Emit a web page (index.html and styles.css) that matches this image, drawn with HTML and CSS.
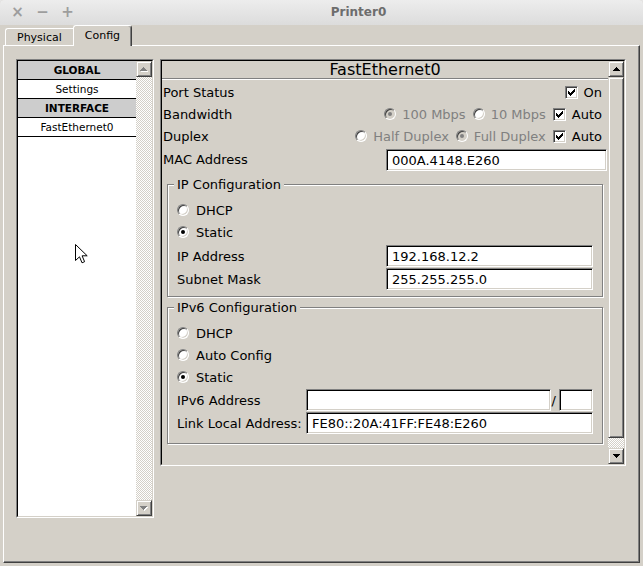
FILE: index.html
```html
<!DOCTYPE html>
<html lang="en">
<head>
<meta charset="utf-8">
<title>Printer0</title>
<link rel="stylesheet" href="styles.css">
</head>
<body>
<div class="window">
  <header class="titlebar">
    <div class="wm-buttons">
      <span class="wm-btn">×</span>
      <span class="wm-btn">−</span>
      <span class="wm-btn">+</span>
    </div>
    <div class="title">Printer0</div>
  </header>

  <nav class="tabs">
    <div class="tab">Physical</div>
    <div class="tab active">Config</div>
  </nav>

  <div class="pane">
    <div class="sidebar sunken">
      <div class="sunken-in list-wrap">
        <ul class="list">
          <li class="item header">GLOBAL</li>
          <li class="item">Settings</li>
          <li class="item header">INTERFACE</li>
          <li class="item">FastEthernet0</li>
        </ul>
        <div class="vscroll">
          <div class="sbtn"><svg class="arrow" width="8" height="5" viewBox="0 0 8 5"><path class="hl" d="M4 1h1v1h1v1h1v1h1v1H1V4h1V3h1V2h1z"/><path class="dis" d="M3 0h1v1h1v1h1v1h1v1H0V3h1V2h1V1h1z"/></svg></div>
          <div class="track"></div>
          <div class="sbtn"><svg class="arrow" width="8" height="5" viewBox="0 0 8 5"><path class="hl" d="M1 1h7v1H7v1H6v1H5v1H4V4H3V3H2V2H1z"/><path class="dis" d="M0 0h7v1H6v1H5v1H4v1H3V3H2V2H1V1H0z"/></svg></div>
        </div>
      </div>
    </div>

    <div class="main sunken">
      <div class="sunken-in panel">
        <div class="content">
          <div class="panel-title">FastEthernet0</div>
          <div class="rows">
            <div class="row">
              <span class="label">Port Status</span>
              <span class="ctrls">
                <span class="check"><svg width="9" height="9" viewBox="0 0 9 9"><path d="M1 3h1v1h1v1h1V4h1V3h1V2h1V1h1v3H7v1H6v1H5v1H4v1H3V7H2V6H1z"/></svg></span>
                <span class="ctext">On</span>
              </span>
            </div>
            <div class="row">
              <span class="label">Bandwidth</span>
              <span class="ctrls">
                <span class="opt"><span class="radio checked disabled"></span><span class="otext dim">100 Mbps</span></span>
                <span class="opt"><span class="radio"></span><span class="otext dim">10 Mbps</span></span>
                <span class="check"><svg width="9" height="9" viewBox="0 0 9 9"><path d="M1 3h1v1h1v1h1V4h1V3h1V2h1V1h1v3H7v1H6v1H5v1H4v1H3V7H2V6H1z"/></svg></span>
                <span class="ctext">Auto</span>
              </span>
            </div>
            <div class="row">
              <span class="label">Duplex</span>
              <span class="ctrls">
                <span class="opt"><span class="radio"></span><span class="otext dim">Half Duplex</span></span>
                <span class="opt"><span class="radio checked disabled"></span><span class="otext dim">Full Duplex</span></span>
                <span class="check"><svg width="9" height="9" viewBox="0 0 9 9"><path d="M1 3h1v1h1v1h1V4h1V3h1V2h1V1h1v3H7v1H6v1H5v1H4v1H3V7H2V6H1z"/></svg></span>
                <span class="ctext">Auto</span>
              </span>
            </div>
            <div class="row mac">
              <span class="label">MAC Address</span>
              <input class="field mac-field" type="text" value="000A.4148.E260">
            </div>
          </div>

          <div class="group ip">
            <div class="group-title">IP Configuration</div>
            <div class="opt-row"><span class="radio"></span><span>DHCP</span></div>
            <div class="opt-row"><span class="radio checked"></span><span>Static</span></div>
            <div class="field-row first">
              <span class="flabel">IP Address</span>
              <input class="field" type="text" value="192.168.12.2">
            </div>
            <div class="field-row">
              <span class="flabel">Subnet Mask</span>
              <input class="field" type="text" value="255.255.255.0">
            </div>
          </div>

          <div class="group v6">
            <div class="group-title">IPv6 Configuration</div>
            <div class="opt-row"><span class="radio"></span><span>DHCP</span></div>
            <div class="opt-row"><span class="radio"></span><span>Auto Config</span></div>
            <div class="opt-row"><span class="radio checked"></span><span>Static</span></div>
            <div class="field-row">
              <span class="flabel">IPv6 Address</span>
              <input class="field" type="text" value="">
              <span class="slash">/</span>
              <input class="field prefix" type="text" value="">
            </div>
            <div class="field-row">
              <span class="flabel">Link Local Address:</span>
              <input class="field" type="text" value="FE80::20A:41FF:FE48:E260">
            </div>
          </div>
        </div>

        <div class="vscroll">
          <div class="sbtn"><svg class="arrow" width="7" height="4" viewBox="0 0 7 4"><path d="M3 0h1v1h1v1h1v1h1v1H0V3h1V2h1V1h1z"/></svg></div>
          <div class="thumb"></div>
          <div class="track"></div>
          <div class="sbtn"><svg class="arrow" width="7" height="4" viewBox="0 0 7 4"><path d="M0 0h7v1H6v1H5v1H4v1H3V3H2V2H1V1H0z"/></svg></div>
        </div>
      </div>
    </div>
  </div>

  <svg class="cursor" width="13" height="20" viewBox="0 0 13 20"><path d="M0.5 0.5V16.5L4.5 12.8L7 18.8L9.6 17.7L7.1 11.8H12.2Z"/></svg>
</div>
</body>
</html>
```

FILE: styles.css
```css
* { box-sizing: border-box; }

html, body { margin: 0; padding: 0; }
html { background: #e6e6e6; }

body {
  width: 643px;
  height: 566px;
  overflow: hidden;
  font-family: "DejaVu Sans", "Liberation Sans", sans-serif;
  font-size: 13px;
  line-height: 15px;
  color: #000;
}

.window {
  position: relative;
  width: 643px;
  height: 566px;
  display: flex;
  flex-direction: column;
  background: #d4d0c8;
  border-radius: 4px 4px 0 0;
  overflow: hidden;
}

/* title bar */
.titlebar {
  flex: none;
  height: 25px;
  display: flex;
  align-items: center;
  background: linear-gradient(#ededed, #dcdcdc);
}
.wm-buttons {
  width: 80px;
  padding-left: 5px;
  display: flex;
}
.wm-btn {
  width: 25px;
  text-align: center;
  color: #9d9d9d;
  font-weight: bold;
  font-size: 15px;
  line-height: 25px;
}
.title {
  flex: 1;
  text-align: center;
  padding-right: 6px;
  font-weight: bold;
  font-size: 12px;
  color: #6d6d6d;
}

/* tabs */
.tabs {
  flex: none;
  height: 20px;
  display: flex;
  align-items: flex-end;
  padding-left: 5px;
  position: relative;
  z-index: 1;
}
.tab {
  height: 17px;
  padding: 2px 11px 0;
  font-size: 11px;
  line-height: 13px;
  border: 1px solid #fff;
  border-bottom: 0;
  border-right: 0;
  border-radius: 3px 0 0 0;
}
.tab.active {
  height: 21px;
  margin-bottom: -1px;
  padding-top: 3px;
  background: #d4d0c8;
  border-right: 1px solid #404040;
  box-shadow: inset -1px 0 0 #808080;
  border-radius: 3px 3px 0 0;
}

/* pane */
.pane {
  flex: none;
  height: 518px;
  margin: 0 3px;
  padding: 13px 0 0 12px;
  border: 1px solid;
  border-color: #fff #404040 #404040 #fff;
  box-shadow: inset -1px -1px 0 #808080;
  display: flex;
  align-items: flex-start;
  gap: 6px;
}

.sunken {
  border: 1px solid;
  border-color: #808080 #fff #fff #808080;
}
.sunken-in {
  height: 100%;
  border: 1px solid;
  border-color: #000 #d4d0c8 #d4d0c8 #000;
}

/* left list */
.sidebar { width: 138px; height: 459px; }
.list-wrap { display: flex; background: #fff; }
.list {
  flex: 1;
  margin: 0;
  padding: 0;
  list-style: none;
}
.item {
  height: 19px;
  border-bottom: 1px solid #000;
  text-align: center;
  font-size: 10.5px;
  line-height: 18px;
}
.item.header {
  background: #cdcdcd;
  font-weight: bold;
}

/* scrollbars */
.vscroll {
  flex: none;
  width: 16px;
  display: flex;
  flex-direction: column;
}
.sbtn, .thumb {
  flex: none;
  background: #d4d0c8;
  border: 1px solid;
  border-color: #d4d0c8 #404040 #404040 #d4d0c8;
  box-shadow: inset 1px 1px 0 #fff, inset -1px -1px 0 #808080;
}
.sbtn {
  height: 16px;
  display: flex;
  align-items: center;
  justify-content: center;
}
.thumb { height: 361px; }
.track {
  flex: 1;
  background: repeating-conic-gradient(#d4d0c8 0 25%, #fff 0 50%) 0 0 / 2px 2px;
}
.arrow { display: block; fill: #000; }
.arrow .dis { fill: #808080; }
.arrow .hl { fill: #fff; }

/* right panel */
.main { width: 466px; height: 407px; }
.panel { display: flex; background: #d4d0c8; }
.content { flex: 1; min-width: 0; }

.panel-title {
  height: 18px;
  font-size: 16px;
  line-height: 17px;
  text-align: center;
  border-bottom: 1px solid #808080;
  box-shadow: 0 1px 0 #fff;
}
.rows { padding-top: 2px; }
.row {
  height: 22px;
  display: flex;
  align-items: center;
  padding-left: 1px;
}
.row.mac { margin-top: 1px; height: 23px; }
.ctrls {
  margin-left: auto;
  display: flex;
  align-items: center;
}
.opt {
  display: flex;
  align-items: center;
  margin-right: 7px;
}
.opt .radio { margin-right: 6px; }
.dim { color: #808080; }
.ctext { margin-left: 6px; padding-right: 6px; }

/* controls */
.radio {
  position: relative;
  flex: none;
  width: 12px;
  height: 12px;
  border-radius: 50%;
  border: 1px solid;
  border-color: #808080 #fff #fff #808080;
  box-shadow: inset 1px 1px 0 #404040, inset -1px -1px 0 #d4d0c8;
  background: #fff;
}
.radio.checked::after {
  content: "";
  position: absolute;
  left: 3px;
  top: 3px;
  width: 4px;
  height: 4px;
  border-radius: 50%;
  background: #000;
}
.radio.disabled { background: #d4d0c8; }
.radio.disabled::after { background: #808080; }

.check {
  flex: none;
  width: 13px;
  height: 13px;
  border: 1px solid;
  border-color: #808080 #fff #fff #808080;
  box-shadow: inset 1px 1px 0 #404040, inset -1px -1px 0 #d4d0c8;
  background: #fff;
  display: flex;
  align-items: center;
  justify-content: center;
}
.check svg { display: block; fill: #000; }

.field {
  height: 22px;
  min-width: 0;
  margin: 0;
  padding: 0 4px 0 5px;
  border: 1px solid;
  border-color: #808080 #fff #fff #808080;
  box-shadow: inset 1px 1px 0 #000, inset -1px -1px 0 #d4d0c8;
  background: #fff;
  font-family: "DejaVu Sans", "Liberation Sans", sans-serif;
  font-size: 13px;
  color: #000;
  outline: none;
}
.mac-field {
  width: 221px;
  margin-left: auto;
  margin-right: 1px;
  margin-top: 1px;
}

/* group boxes */
.group {
  margin: 13px 5px 0;
  padding: 0 9px 6px;
  border: 1px solid #808080;
  box-shadow: inset 1px 1px 0 #fff, 1px 1px 0 #fff;
}
.group + .group { margin-top: 10px; }
.group.v6 { padding-bottom: 9px; }
.group-title {
  display: table;
  height: 15px;
  margin: -8px 0 7px -3px;
  padding: 0 3px;
  background: #d4d0c8;
}
.opt-row {
  height: 22px;
  display: flex;
  align-items: center;
}
.opt-row .radio { margin-right: 7px; }
.field-row {
  height: 22px;
  margin-top: 1px;
  display: flex;
  align-items: center;
}
.field-row.first { margin-top: 2px; }
.flabel { flex: none; }
.ip .flabel { width: 209px; }
.v6 .flabel { width: 129px; }
.field-row .field { flex: 1; }
.slash { padding: 0 3px 0 1px; }
.field-row .prefix { flex: none; width: 34px; }

/* mouse pointer captured in the screenshot */
.cursor {
  position: absolute;
  left: 75px;
  top: 244px;
  fill: #fff;
  stroke: #000;
  stroke-width: 1;
}
```
